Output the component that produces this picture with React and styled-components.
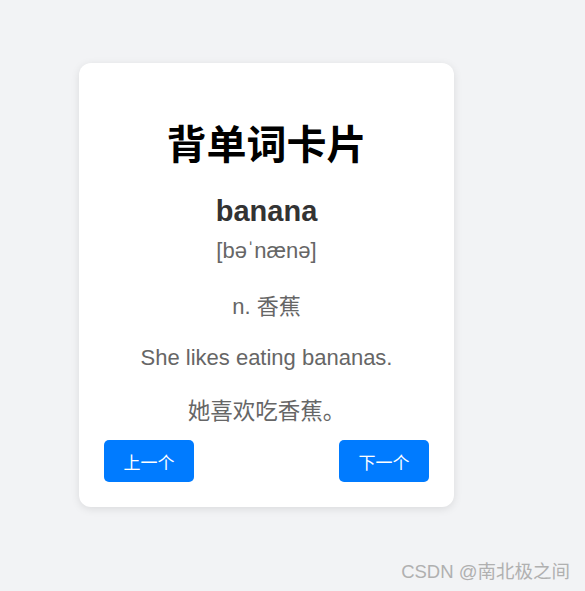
import React from "react";
import styled, { createGlobalStyle } from "styled-components";

const Global = createGlobalStyle`
  html, body { margin: 0; padding: 0; background: #f2f3f5; }
  body { font-family: "Liberation Sans", Arial, "Noto Sans CJK SC", sans-serif; width: 585px; height: 591px; overflow: hidden; }
`;

const Page = styled.div`
  position: relative;
  width: 585px;
  height: 591px;
  padding: 63px 0 0 79px;
  box-sizing: border-box;
`;

const Card = styled.div`
  width: 375px;
  box-sizing: border-box;
  background: #fff;
  border-radius: 12px;
  box-shadow: 0 2px 8px rgba(0, 0, 0, 0.1);
  padding: 58px 25px 25px;
  display: flex;
  flex-direction: column;
  align-items: center;
  text-align: center;
`;

const Title = styled.h1`
  margin: 0;
  font-size: 40px;
  line-height: 48px;
  font-weight: 700;
  color: #000;
  font-family: "Liberation Sans", "Noto Sans CJK SC", sans-serif;
`;

const Word = styled.div`
  margin-top: 25px;
  font-size: 29px;
  line-height: 34px;
  font-weight: 700;
  color: #333;
`;

const Line = styled.div`
  margin-top: ${(p) => p.$mt}px;
  font-size: ${(p) => p.$fs || 22}px;
  line-height: 28px;
  color: #666;
`;

const Buttons = styled.div`
  margin-top: 14px;
  align-self: stretch;
  display: flex;
  justify-content: space-between;
`;

const Button = styled.button`
  width: 90px;
  height: 42px;
  border: none;
  border-radius: 5px;
  background: #007bff;
  color: #fff;
  font-size: 17px;
  font-family: "Liberation Sans", "Noto Sans CJK SC", sans-serif;
  cursor: pointer;
`;

const Watermark = styled.div`
  position: absolute;
  right: 15px;
  bottom: 8px;
  font-size: 18.5px;
  color: #b0b0b0;
  font-family: "Liberation Sans", "Noto Sans CJK SC", sans-serif;
`;

export default function App() {
  return (
    <>
      <Global />
      <Page>
        <Card>
          <Title>背单词卡片</Title>
          <Word>banana</Word>
          <Line $mt={9}>[bəˈnænə]</Line>
          <Line $mt={28}>n. 香蕉</Line>
          <Line $mt={23}>She likes eating bananas.</Line>
          <Line $mt={26} $fs={22.5}>她喜欢吃香蕉。</Line>
          <Buttons>
            <Button>上一个</Button>
            <Button>下一个</Button>
          </Buttons>
        </Card>
        <Watermark>CSDN @南北极之间</Watermark>
      </Page>
    </>
  );
}
